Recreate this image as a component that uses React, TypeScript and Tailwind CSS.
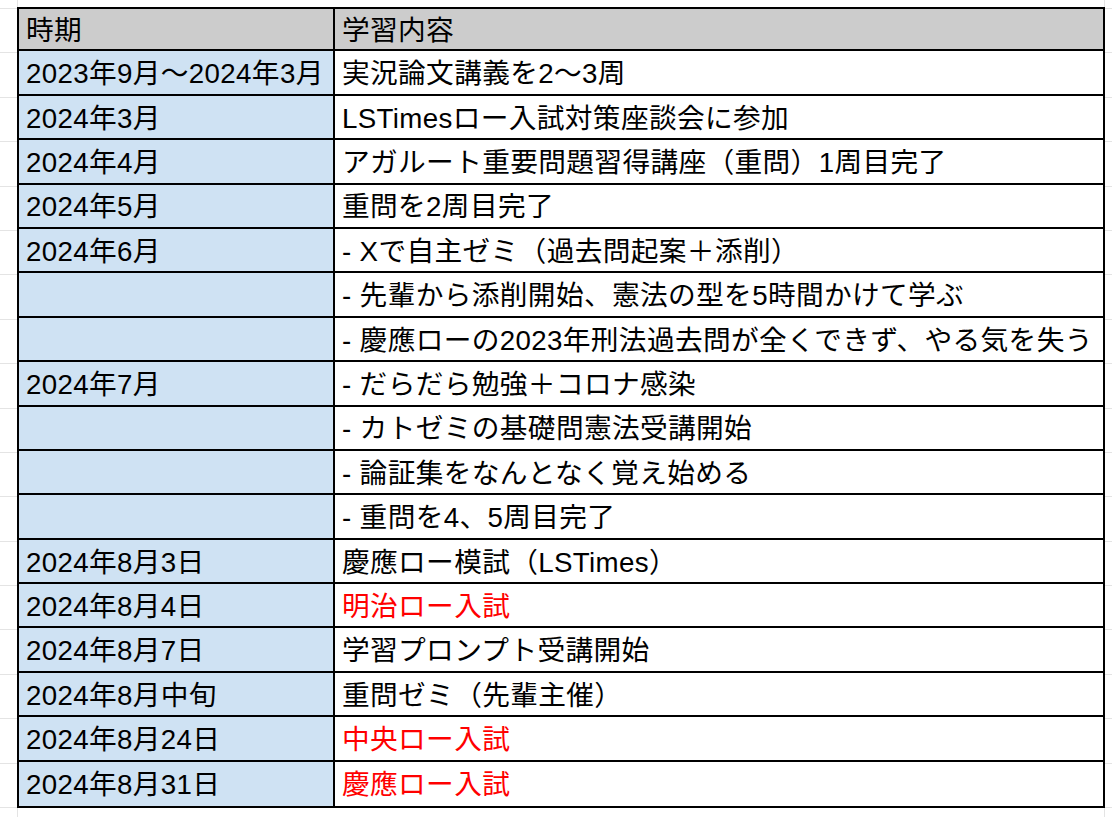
const rows: { when: string; what: string; red?: boolean }[] = [
  { when: "2023年9月～2024年3月", what: "実況論文講義を2〜3周" },
  { when: "2024年3月", what: "LSTimesロー入試対策座談会に参加" },
  { when: "2024年4月", what: "アガルート重要問題習得講座（重問）1周目完了" },
  { when: "2024年5月", what: "重問を2周目完了" },
  { when: "2024年6月", what: "- Xで自主ゼミ（過去問起案＋添削）" },
  { when: "", what: "- 先輩から添削開始、憲法の型を5時間かけて学ぶ" },
  { when: "", what: "- 慶應ローの2023年刑法過去問が全くできず、やる気を失う" },
  { when: "2024年7月", what: "- だらだら勉強＋コロナ感染" },
  { when: "", what: "- カトゼミの基礎問憲法受講開始" },
  { when: "", what: "- 論証集をなんとなく覚え始める" },
  { when: "", what: "- 重問を4、5周目完了" },
  { when: "2024年8月3日", what: "慶應ロー模試（LSTimes）" },
  { when: "2024年8月4日", what: "明治ロー入試", red: true },
  { when: "2024年8月7日", what: "学習プロンプト受講開始" },
  { when: "2024年8月中旬", what: "重問ゼミ（先輩主催）" },
  { when: "2024年8月24日", what: "中央ロー入試", red: true },
  { when: "2024年8月31日", what: "慶應ロー入試", red: true },
];

// faint sheet gridlines outside the table
const Gutter = ({ className }: { className: string }) => (
  <div className={`flex flex-col ${className}`}>
    <div className="h-[9px] border-b border-[#e4e4e4]" />
    {Array.from({ length: 18 }).map((_, i) => (
      <div key={i} className="h-[44.4px] shrink-0 border-b border-[#e4e4e4]" />
    ))}
  </div>
);

export default function App() {
  return (
    <div className="w-[1112px] h-[817px] overflow-hidden bg-white text-black font-['Liberation_Sans','Noto_Sans_CJK_JP',sans-serif] text-[27.7px] tracking-[0.35px] leading-none">
      <div className="flex">
        <Gutter className="w-[17px] shrink-0" />
        <div className="flex flex-col w-[1088px] shrink-0">
          <div className="h-[7px] flex">
            <div className="w-[1px] h-full bg-[#e4e4e4]" />
            <div className="flex-1" />
            <div className="w-[1px] h-full bg-[#e4e4e4]" />
          </div>
          <div className="border-2 border-black">
            <div className="flex h-[42.4px] bg-[#cccccc] border-b-2 border-black">
              <div className="w-[316px] border-r-2 border-black flex items-center px-[7px] pt-[3px]">時期</div>
              <div className="flex-1 flex items-center px-[7px] pt-[3px]">学習内容</div>
            </div>
            {rows.map((r, i) => (
              <div
                key={i}
                className={`flex h-[44.4px] ${i < rows.length - 1 ? "border-b-2 border-black" : "h-[42.4px]"}`}
              >
                <div className="w-[316px] bg-[#cfe2f3] border-r-2 border-black flex items-center px-[7px] pt-[3px] whitespace-nowrap">
                  {r.when}
                </div>
                <div className={`flex-1 flex items-center px-[7px] pt-[3px] whitespace-nowrap ${r.red ? "text-[#ff0000]" : ""}`}>
                  {r.what}
                </div>
              </div>
            ))}
          </div>
          <div className="h-[12px] flex">
            <div className="w-[1px] h-full bg-[#e4e4e4]" />
            <div className="flex-1" />
            <div className="w-[1px] h-full bg-[#e4e4e4]" />
          </div>
        </div>
        <Gutter className="flex-1" />
      </div>
    </div>
  );
}
